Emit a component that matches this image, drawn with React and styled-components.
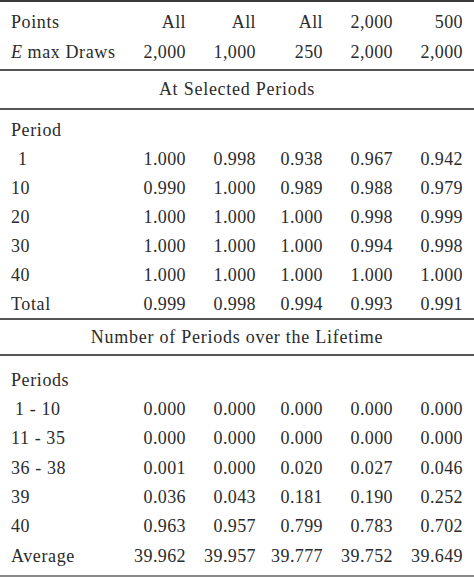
import React from "react";
import styled, { createGlobalStyle } from "styled-components";

const Global = createGlobalStyle`
  html, body { margin: 0; padding: 0; background: #fff; }
  body { font-family: "Liberation Serif", "Times New Roman", serif; color: #2b2b2b; }
`;

const Table = styled.div`
  width: 474px;
  height: 577px;
  box-sizing: border-box;
  border-top: 2px solid #3a3a3a;
  border-bottom: 2px solid #8a8a8a;
  font-size: 18px;
`;

const Section = styled.div`
  padding: ${(p) => p.$pad || "0"};
  border-bottom: ${(p) => (p.$rule ? "2px solid #555" : "none")};
`;

const Row = styled.div`
  display: grid;
  grid-template-columns: 105px 70px 70px 67px 70px 70px;
  padding: 0 11px;
  height: ${(p) => p.$h}px;
  align-items: center;
  padding-top: 1px;
  box-sizing: border-box;
`;

const Label = styled.div`
  padding-left: ${(p) => p.$indent || 0}px;
  white-space: nowrap;
  letter-spacing: 0.6px;
`;

const Num = styled.div`
  text-align: right;
  white-space: nowrap;
  letter-spacing: 0.4px;
`;

const Title = styled.div`
  height: ${(p) => p.$h}px;
  display: flex;
  align-items: center;
  justify-content: center;
  letter-spacing: 0.75px;
`;

const Ital = styled.i`
  font-style: italic;
  margin-right: 5px;
`;

const selected = [
  ["1", 7, ["1.000", "0.998", "0.938", "0.967", "0.942"]],
  ["10", 0, ["0.990", "1.000", "0.989", "0.988", "0.979"]],
  ["20", 0, ["1.000", "1.000", "1.000", "0.998", "0.999"]],
  ["30", 0, ["1.000", "1.000", "1.000", "0.994", "0.998"]],
  ["40", 0, ["1.000", "1.000", "1.000", "1.000", "1.000"]],
  ["Total", 0, ["0.999", "0.998", "0.994", "0.993", "0.991"]],
];

const lifetime = [
  ["1 - 10", 4, ["0.000", "0.000", "0.000", "0.000", "0.000"]],
  ["11 - 35", 0, ["0.000", "0.000", "0.000", "0.000", "0.000"]],
  ["36 - 38", 0, ["0.001", "0.000", "0.020", "0.027", "0.046"]],
  ["39", 0, ["0.036", "0.043", "0.181", "0.190", "0.252"]],
  ["40", 0, ["0.963", "0.957", "0.799", "0.783", "0.702"]],
  ["Average", 0, ["39.962", "39.957", "39.777", "39.752", "39.649"]],
];

function DataRow({ label, indent, values, h }) {
  return (
    <Row $h={h}>
      <Label $indent={indent}>{label}</Label>
      {values.map((v, i) => (
        <Num key={i}>{v}</Num>
      ))}
    </Row>
  );
}

export default function App() {
  return (
    <>
      <Global />
      <Table>
        <Section $pad="5px 0 2px" $rule>
          <DataRow label="Points" values={["All", "All", "All", "2,000", "500"]} h={30} />
          <Row $h={30}>
            <Label>
              <Ital>E</Ital>max Draws
            </Label>
            {["2,000", "1,000", "250", "2,000", "2,000"].map((v, i) => (
              <Num key={i}>{v}</Num>
            ))}
          </Row>
        </Section>
        <Section $rule>
          <Title $h={37}>At Selected Periods</Title>
        </Section>
        <Section $pad="5px 0 0" $rule>
          <Row $h={29}>
            <Label>Period</Label>
          </Row>
          {selected.map(([l, ind, v]) => (
            <DataRow key={l} label={l} indent={ind} values={v} h={29} />
          ))}
        </Section>
        <Section $rule>
          <Title $h={34}>Number of Periods over the Lifetime</Title>
        </Section>
        <Section $pad="9px 0 0">
          <Row $h={29.33}>
            <Label>Periods</Label>
          </Row>
          {lifetime.map(([l, ind, v]) => (
            <DataRow key={l} label={l} indent={ind} values={v} h={29.33} />
          ))}
        </Section>
      </Table>
    </>
  );
}
